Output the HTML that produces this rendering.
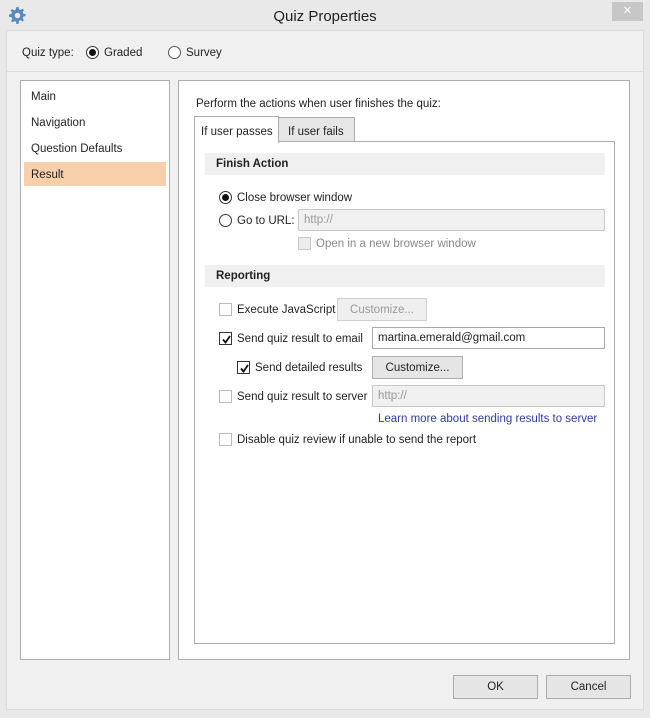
<!DOCTYPE html>
<html><head><meta charset="utf-8"><style>
*{box-sizing:border-box;margin:0;padding:0}
body{width:650px;height:718px;background:#e9e9e9;font-family:"Liberation Sans",sans-serif;font-size:11.5px;letter-spacing:0;color:#222;position:relative;overflow:hidden}
.a{position:absolute}
.t{position:absolute;line-height:14px;white-space:nowrap;margin-top:1px}
.rb{position:absolute;width:13px;height:13px;border:1px solid #333;border-radius:50%;background:#fff}
.rb.on::after{content:"";position:absolute;left:2px;top:2px;width:7px;height:7px;border-radius:50%;background:#111}
.cb{position:absolute;width:13px;height:13px;border:1px solid #333;background:#fff}
.cb.off{border-color:#bbb}
.cb.dis{border-color:#c8c8c8;background:#ececec}
.cb svg{position:absolute;left:1px;top:1px}
.inp{position:absolute;border:1px solid #c9c9c9;background:#f0f0f0;color:#999;padding-left:5px;line-height:20px}
.btn{position:absolute;border:1px solid #adadad;background:#e5e5e5;text-align:center;line-height:22px}
.hdr{position:absolute;left:205px;width:400px;height:22px;background:#f0f0f0;font-weight:bold;padding-left:11px;line-height:23px}
</style></head><body>
<div class="a" style="left:6px;top:30px;width:638px;height:680px;background:#f0f0f0;border:1px solid #dcdcdc"></div>
<svg class="a" style="left:9px;top:7px" width="17" height="17" viewBox="0 0 16 16"><path fill="#5a88c0" d="M7 0h2l.4 2.2 1.5.6 1.8-1.3 1.4 1.4-1.3 1.8.6 1.5 2.2.4v2l-2.2.4-.6 1.5 1.3 1.8-1.4 1.4-1.8-1.3-1.5.6L9 16H7l-.4-2.2-1.5-.6-1.8 1.3-1.4-1.4 1.3-1.8-.6-1.5L0 9V7l2.2-.4.6-1.5-1.3-1.8 1.4-1.4 1.8 1.3 1.5-.6z"/><circle cx="8" cy="8" r="2.6" fill="#e9e9e9"/></svg>
<div class="t" style="left:0;width:650px;text-align:center;top:7px;font-size:15px;line-height:18px;letter-spacing:0">Quiz Properties</div>
<div class="a" style="left:612px;top:2px;width:31px;height:19px;background:#c7c7c7;color:#fff;text-align:center;line-height:19px;font-size:11px">✕</div>
<div class="t" style="left:22px;top:45px">Quiz type:</div>
<div class="rb on" style="left:86px;top:46px"></div><div class="t" style="left:104px;top:45px">Graded</div>
<div class="rb" style="left:168px;top:46px;border-color:#555"></div><div class="t" style="left:186px;top:45px">Survey</div>
<div class="a" style="left:7px;top:71px;width:636px;height:1px;background:#dcdcdc"></div>
<div class="a" style="left:20px;top:80px;width:150px;height:580px;background:#fff;border:1px solid #adadad"></div>
<div class="t" style="left:31px;top:89px">Main</div>
<div class="t" style="left:31px;top:115px">Navigation</div>
<div class="t" style="left:31px;top:141px">Question Defaults</div>
<div class="a" style="left:24px;top:162px;width:142px;height:24px;background:#f8cfab"></div>
<div class="t" style="left:31px;top:167px">Result</div>
<div class="a" style="left:178px;top:80px;width:452px;height:580px;background:#fff;border:1px solid #adadad"></div>
<div class="t" style="left:196px;top:96px">Perform the actions when user finishes the quiz:</div>
<div class="a" style="left:194px;top:141px;width:421px;height:503px;border:1px solid #adadad;background:#fff"></div>
<div class="a" style="left:278px;top:117px;width:77px;height:25px;border:1px solid #adadad;background:#e6e6e6"></div>
<div class="t" style="left:288px;top:124px">If user fails</div>
<div class="a" style="left:194px;top:116px;width:85px;height:27px;border:1px solid #adadad;border-bottom:none;background:#fff"></div>
<div class="t" style="left:201px;top:124px">If user passes</div>
<div class="hdr" style="top:153px">Finish Action</div>
<div class="rb on" style="left:219px;top:191px"></div><div class="t" style="left:237px;top:190px">Close browser window</div>
<div class="rb" style="left:219px;top:214px"></div><div class="t" style="left:237px;top:213px">Go to URL:</div>
<div class="inp" style="left:298px;top:209px;width:307px;height:22px">http://</div>
<div class="cb dis" style="left:298px;top:237px"></div><div class="t" style="left:316px;top:236px;color:#888">Open in a new browser window</div>
<div class="hdr" style="top:265px">Reporting</div>
<div class="cb off" style="left:219px;top:303px"></div><div class="t" style="left:237px;top:302px">Execute JavaScript</div>
<div class="btn" style="left:337px;top:298px;width:90px;height:23px;border-color:#cfcfcf;background:#efefef;color:#999">Customize...</div>
<div class="cb" style="left:219px;top:332px"><svg width="11" height="11"><path d="M2 5.5l2.5 3L9 2" stroke="#111" stroke-width="1.8" fill="none"/></svg></div><div class="t" style="left:237px;top:331px">Send quiz result to email</div>
<div class="inp" style="left:372px;top:327px;width:233px;height:22px;background:#fff;border-color:#a8a8a8;color:#222">martina.emerald@gmail.com</div>
<div class="cb" style="left:237px;top:361px"><svg width="11" height="11"><path d="M2 5.5l2.5 3L9 2" stroke="#111" stroke-width="1.8" fill="none"/></svg></div><div class="t" style="left:255px;top:360px">Send detailed results</div>
<div class="btn" style="left:372px;top:356px;width:91px;height:23px">Customize...</div>
<div class="cb off" style="left:219px;top:390px"></div><div class="t" style="left:237px;top:389px">Send quiz result to server</div>
<div class="inp" style="left:372px;top:385px;width:233px;height:22px">http://</div>
<div class="t" style="left:378px;top:411px;color:#2e3c99">Learn more about sending results to server</div>
<div class="cb off" style="left:219px;top:433px"></div><div class="t" style="left:237px;top:432px">Disable quiz review if unable to send the report</div>
<div class="btn" style="left:453px;top:675px;width:85px;height:24px">OK</div>
<div class="btn" style="left:546px;top:675px;width:85px;height:24px">Cancel</div>
</body></html>
